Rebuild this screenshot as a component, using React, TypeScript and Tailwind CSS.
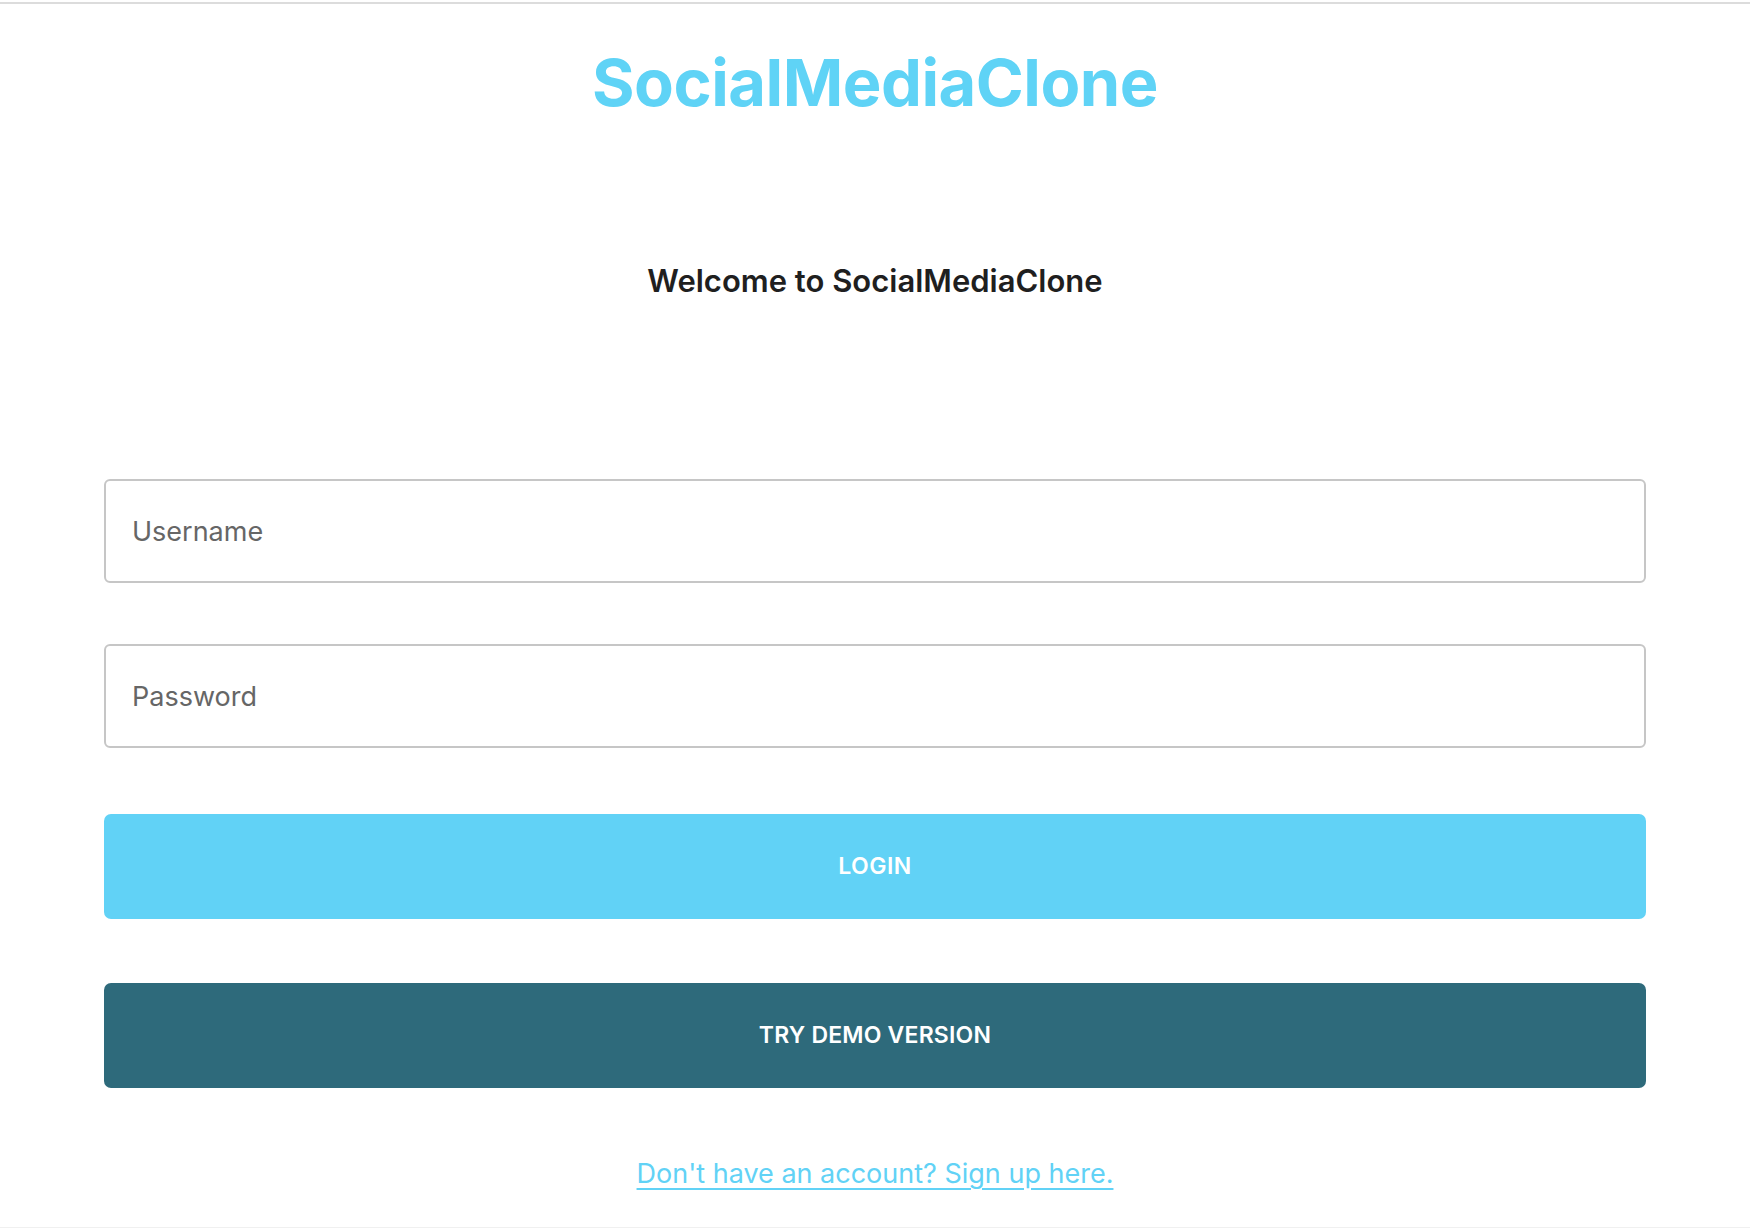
import React, { useState } from 'react';

export default function App() {
  const [username, setUsername] = useState('');
  const [password, setPassword] = useState('');

  return (
    <div className="w-full h-[1228px] bg-white flex flex-col font-[Inter,'Noto_Sans',sans-serif]">
      <div className="h-[2px] shrink-0" />
      <div className="h-[2px] shrink-0 bg-[#dcdcdc]" />

      <main className="flex-1 flex flex-col items-center px-[104px]">
        <h1 className="mt-[34px] text-[65px] leading-[90px] font-bold tracking-[-0.5px] text-[#5fd3f6]">SocialMediaClone</h1>

        <h2 className="mt-[134px] text-[31px] leading-[38px] font-semibold text-[#1f1f1f]">Welcome to SocialMediaClone</h2>

        <form className="w-full mt-[179px] flex flex-col" onSubmit={e => e.preventDefault()}>
          <input
            value={username}
            onChange={e => setUsername(e.target.value)}
            placeholder="Username"
            className="w-full h-[104px] px-[26px] border-2 border-[#c6c6c6] rounded-[6px] text-[27px] text-[#222] placeholder:text-[#666] outline-none"
          />
          <input
            type="password"
            value={password}
            onChange={e => setPassword(e.target.value)}
            placeholder="Password"
            className="w-full h-[104px] mt-[61px] px-[26px] border-2 border-[#c6c6c6] rounded-[6px] text-[27px] text-[#222] placeholder:text-[#666] outline-none"
          />
          <button type="submit" className="w-full h-[105px] mt-[66px] rounded-[7px] bg-[#61d2f6] text-white text-[23px] font-semibold tracking-[0.5px] uppercase">
            Login
          </button>
          <button type="button" className="w-full h-[105px] mt-[64px] rounded-[7px] bg-[#2e6a7b] text-white text-[23px] font-semibold tracking-[0.2px] uppercase">
            Try demo version
          </button>
        </form>

        <a href="#" className="mt-[68px] text-[27px] leading-[36px] text-[#61d2f6] underline underline-offset-[5px] decoration-2">
          Don't have an account? Sign up here.
        </a>
      </main>

      <div className="h-px shrink-0 bg-[#f0f0f0]" />
    </div>
  );
}
